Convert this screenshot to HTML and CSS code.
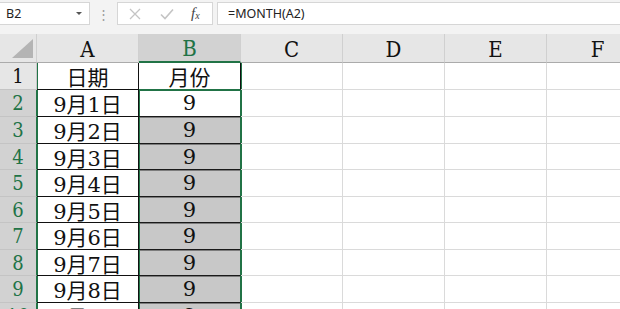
FILE: index.html
```html
<!DOCTYPE html>
<html lang="zh">
<head>
  <meta charset="UTF-8" />
  <title>MONTH</title>
  <link rel="stylesheet" href="styles.css">
</head>
<body>
  <div class="toolbar">
    <div class="name-box">
      <span>B2</span>
      <span class="caret"></span>
    </div>
    <div class="dots">⋮</div>
    <div class="fx-buttons">
      <svg width="12" height="12" viewBox="0 0 12 12"><path d="M1 1 L11 11 M11 1 L1 11" stroke="#c4c4c4" stroke-width="1.3" fill="none"/></svg>
      <svg width="14" height="12" viewBox="0 0 14 12"><path d="M1 6.5 L5 10.5 L13 1.5" stroke="#c4c4c4" stroke-width="1.6" fill="none"/></svg>
      <span class="fx">f<sub>x</sub></span>
    </div>
    <div class="formula">=MONTH(A2)</div>
  </div>

  <div class="sheet">
    <div class="corner"><span class="tri"></span></div>
    <div class="ch">A</div>
    <div class="ch sel">B</div>
    <div class="ch">C</div>
    <div class="ch">D</div>
    <div class="ch">E</div>
    <div class="ch">F</div>

    <div class="rh">1</div>
    <div class="cell a">日期</div>
    <div class="cell b b1">月份</div>
    <div class="cell grid c"></div><div class="cell grid"></div><div class="cell grid"></div><div class="cell grid"></div>

    <div class="rh sel">2</div>
    <div class="cell a">9月1日</div>
    <div class="cell b active">9</div>
    <div class="cell grid c"></div><div class="cell grid"></div><div class="cell grid"></div><div class="cell grid"></div>

    <div class="rh sel">3</div>
    <div class="cell a">9月2日</div>
    <div class="cell b fill">9</div>
    <div class="cell grid c"></div><div class="cell grid"></div><div class="cell grid"></div><div class="cell grid"></div>

    <div class="rh sel">4</div>
    <div class="cell a">9月3日</div>
    <div class="cell b fill">9</div>
    <div class="cell grid c"></div><div class="cell grid"></div><div class="cell grid"></div><div class="cell grid"></div>

    <div class="rh sel">5</div>
    <div class="cell a">9月4日</div>
    <div class="cell b fill">9</div>
    <div class="cell grid c"></div><div class="cell grid"></div><div class="cell grid"></div><div class="cell grid"></div>

    <div class="rh sel">6</div>
    <div class="cell a">9月5日</div>
    <div class="cell b fill">9</div>
    <div class="cell grid c"></div><div class="cell grid"></div><div class="cell grid"></div><div class="cell grid"></div>

    <div class="rh sel">7</div>
    <div class="cell a">9月6日</div>
    <div class="cell b fill">9</div>
    <div class="cell grid c"></div><div class="cell grid"></div><div class="cell grid"></div><div class="cell grid"></div>

    <div class="rh sel">8</div>
    <div class="cell a">9月7日</div>
    <div class="cell b fill">9</div>
    <div class="cell grid c"></div><div class="cell grid"></div><div class="cell grid"></div><div class="cell grid"></div>

    <div class="rh sel">9</div>
    <div class="cell a">9月8日</div>
    <div class="cell b fill">9</div>
    <div class="cell grid c"></div><div class="cell grid"></div><div class="cell grid"></div><div class="cell grid"></div>

    <div class="rh sel">10</div>
    <div class="cell a">9月9日</div>
    <div class="cell b fill">9</div>
    <div class="cell grid c"></div><div class="cell grid"></div><div class="cell grid"></div><div class="cell grid"></div>
  </div>
</body>
</html>
```

FILE: styles.css
```css
body {
  margin: 0;
  width: 620px;
  height: 309px;
  overflow: hidden;
  background: #f3f3f3;
  font-family: "DejaVu Serif", "Noto Sans CJK SC", serif;
}

/* formula bar */
.toolbar {
  display: flex;
  align-items: center;
  height: 23px;
  padding: 2px 0 9px 0;
  font-family: "Noto Sans", "Liberation Sans", sans-serif;
  font-size: 12.5px;
  color: #222;
}
.name-box, .fx-buttons, .formula {
  height: 23px;
  box-sizing: border-box;
  background: white;
  border: 1px solid #d6d6d6;
  display: flex;
  align-items: center;
}
.name-box {
  width: 90px;
  border-left: none;
  padding: 0 6px;
  justify-content: space-between;
}
.caret {
  width: 0;
  height: 0;
  border-left: 3px solid transparent;
  border-right: 3px solid transparent;
  border-top: 3px solid #555;
  margin-right: 1px;
}
.dots {
  width: 27px;
  text-align: center;
  color: #9a9a9a;
  font-size: 13px;
}
.fx-buttons {
  width: 96px;
  padding: 0 0 0 11px;
  gap: 19px;
}
.fx {
  font-family: "Liberation Serif", serif;
  font-style: italic;
  font-size: 15px;
  color: #444;
  margin-left: -2px;
}
.fx sub {
  font-size: 10px;
  vertical-align: -1px;
}
.formula {
  flex: 1;
  margin-left: 4px;
  padding-left: 10px;
  border-right: none;
}

/* sheet */
.sheet {
  display: grid;
  grid-template-columns: 37px repeat(6, 102px);
  grid-template-rows: 29px 27px 27px 27px 26px 27px 26px 27px 26px 27px 27px;
}
.corner {
  background: #e6e6e6;
  border-right: 1px solid #d0d0d0;
  border-bottom: 1px solid #ababab;
  position: relative;
}
.tri {
  position: absolute;
  right: 3px;
  bottom: 4px;
  width: 0;
  height: 0;
  border-left: 21px solid transparent;
  border-bottom: 19px solid #b4b4b4;
}
.ch {
  background: #e6e6e6;
  border-right: 1px solid #d0d0d0;
  border-bottom: 1px solid #ababab;
  display: flex;
  align-items: center;
  justify-content: center;
  font-size: 22px;
  font-stretch: condensed;
  color: #111;
  padding-top: 2px;
  box-sizing: border-box;
}
.ch.sel {
  background: #d2d2d2;
  color: #217346;
  border-bottom: 2px solid #217346;
}
.rh {
  background: #e6e6e6;
  border-right: 1px solid #c8c8c8;
  border-bottom: 1px solid #c4c4c4;
  display: flex;
  align-items: center;
  justify-content: center;
  font-size: 20px;
  font-stretch: condensed;
  color: #111;
}
.rh.sel {
  background: #d2d2d2;
  color: #217346;
  border-right: 1px solid #217346;
}
.cell {
  background: white;
  display: flex;
  align-items: center;
  justify-content: center;
  font-size: 21px;
  color: #111;
  box-sizing: border-box;
}
.cell.a {
  border-right: 1px solid #111;
  border-bottom: 1px solid #111;
  box-shadow: inset 1px 0 0 #217346;
}
.rh:first-of-type + .a {
  box-shadow: none;
}
.cell.b {
  border-right: 1px solid #217346;
  border-bottom: 1px solid #1a1a1a;
  box-shadow: inset 1px 0 0 #217346;
}
.cell.b1 {
  border-right: 1px solid #111;
  border-bottom: 1px solid #217346;
  box-shadow: none;
}
.cell.active {
  box-shadow: inset 1px 0 0 #217346, inset 0 1px 0 #217346;
}
.cell.fill {
  background: #c8c8c8;
  box-shadow: inset 1px 0 0 #217346, inset 0 1px 0 #7c7c7c;
}
.cell.grid {
  border-right: 1px solid #dadada;
  border-bottom: 1px solid #dadada;
}
.cell.grid.c {
  box-shadow: inset 1px 0 0 #217346;
}
```
